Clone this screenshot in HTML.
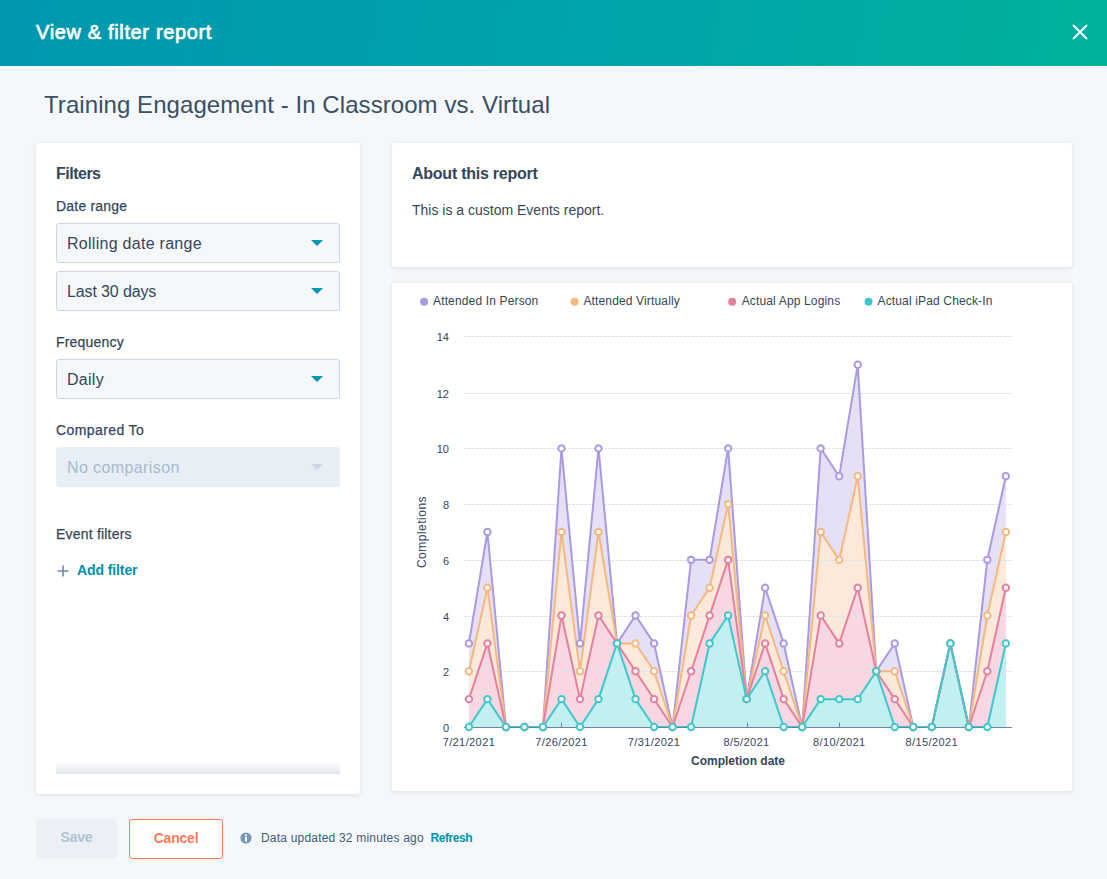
<!DOCTYPE html>
<html><head><meta charset="utf-8">
<style>
*{box-sizing:border-box;margin:0;padding:0}
html,body{width:1107px;height:879px;overflow:hidden;background:#f5f8fa;font-family:"Liberation Sans",sans-serif;color:#33475b}
.hdr{position:absolute;left:0;top:0;width:1107px;height:66px;background:linear-gradient(100deg,#0097b0 0%,#00a4aa 55%,#00b29c 100%)}
.hdr h1{position:absolute;left:36px;top:20px;font-size:20px;font-weight:normal;-webkit-text-stroke:0.7px #fff;color:#fff;line-height:24px;white-space:nowrap;letter-spacing:0.65px}
.close{position:absolute;left:1072px;top:24px;width:16px;height:16px}
.title{position:absolute;left:44px;top:90px;font-size:24px;font-weight:normal;line-height:30px;white-space:nowrap;color:#3a4f63;letter-spacing:0.07px}
.card{position:absolute;background:#fff;border-radius:3px;box-shadow:0 1px 5px rgba(45,62,80,.12)}
.lbl{position:absolute;left:20px;font-size:14px;line-height:18px;white-space:nowrap;-webkit-text-stroke:0.25px #33475b;letter-spacing:0.2px}
.h{font-size:16px;font-weight:bold;-webkit-text-stroke:0;letter-spacing:-0.25px}
.sel{position:absolute;left:20px;width:284px;height:40px;background:#f5f8fa;border:1px solid #cbd6e2;border-radius:3px}
.sel span{position:absolute;left:10px;top:9.5px;font-size:16px;line-height:20px;white-space:nowrap;letter-spacing:0.28px}
.sel i{position:absolute;right:16.5px;top:16px;width:0;height:0;border-left:6px solid transparent;border-right:6px solid transparent;border-top:6px solid #0098b2}
.sel.dis{background:#e7eef5;border-color:#e7eef5}
.sel.dis span{color:#a8bacd}
.sel.dis i{border-top-color:#cbd6e2}
.btn{position:absolute;top:819px;height:40px;border-radius:3px;font-size:14px;font-weight:bold;text-align:center;line-height:36px;letter-spacing:-0.2px}
</style></head><body>
<div class="hdr"><h1>View &amp; filter report</h1>
<svg class="close" viewBox="0 0 16 16"><path d="M1 1L15 15M15 1L1 15" stroke="#fff" stroke-width="2" fill="none"/></svg>
</div>
<div class="title">Training Engagement - In Classroom vs. Virtual</div>

<div class="card" style="left:36px;top:143px;width:324px;height:651px">
  <div class="lbl h" style="top:22px;letter-spacing:-0.5px">Filters</div>
  <div class="lbl" style="top:54px">Date range</div>
  <div class="sel" style="top:80px"><span>Rolling date range</span><i></i></div>
  <div class="sel" style="top:128px"><span style="letter-spacing:-0.13px">Last 30 days</span><i></i></div>
  <div class="lbl" style="top:190px">Frequency</div>
  <div class="sel" style="top:216px"><span>Daily</span><i></i></div>
  <div class="lbl" style="top:278px;letter-spacing:0.4px">Compared To</div>
  <div class="sel dis" style="top:304px"><span style="letter-spacing:0.4px">No comparison</span><i></i></div>
  <div class="lbl" style="top:382px">Event filters</div>
  <svg style="position:absolute;left:21px;top:421.5px" width="12" height="12" viewBox="0 0 12 12"><path d="M6 0.5V11.5M0.5 6H11.5" stroke="#6f8aa8" stroke-width="1.6" fill="none"/></svg>
  <div class="lbl" style="top:418px;left:41px;color:#0091ae;font-weight:bold;-webkit-text-stroke:0;letter-spacing:-0.1px">Add filter</div>
  <div style="position:absolute;left:20px;top:618px;width:284px;height:13px;background:linear-gradient(#fff,#e1e7ef)"></div>
</div>

<div class="card" style="left:392px;top:143px;width:680px;height:124px">
  <div class="lbl h" style="top:22px">About this report</div>
  <div class="lbl" style="top:58px;-webkit-text-stroke:0;letter-spacing:0">This is a custom Events report.</div>
</div>

<div class="card" style="left:392px;top:283px;width:680px;height:508px" id="chartcard">
</div>

<div class="btn" style="left:36px;width:81px;background:#eaf0f6;color:#b0c1d4">Save</div>
<div class="btn" style="left:129px;width:94px;background:#fff;border:1px solid #ff7a59;color:#ff7a59">Cancel</div>
<svg style="position:absolute;left:240px;top:832px" width="12" height="12" viewBox="0 0 12 12"><circle cx="6" cy="6" r="5.6" fill="#7c98b6"/><circle cx="6" cy="3.3" r="1.1" fill="#fff"/><rect x="5" y="5" width="2" height="4.6" fill="#fff"/></svg>
<div style="position:absolute;left:261px;top:830px;font-size:12px;line-height:16px;white-space:nowrap;color:#425b76;letter-spacing:0.2px">Data updated 32 minutes ago <b style="color:#0091ae;margin-left:3px;letter-spacing:-0.4px">Refresh</b></div>
<!--CHART--><svg id="chart" width="1107" height="879" style="position:absolute;left:0;top:0">
<polygon points="468.90,727.00 468.90,643.42 487.41,531.98 505.93,727.00 524.44,727.00 542.96,727.00 561.48,448.40 579.99,643.42 598.50,448.40 617.02,643.42 635.53,615.56 654.05,643.42 672.57,727.00 691.08,559.84 709.60,559.84 728.11,448.40 746.62,699.14 765.14,587.70 783.65,643.42 802.17,727.00 820.68,448.40 839.20,476.26 857.71,364.82 876.23,671.28 894.75,643.42 913.26,727.00 931.77,727.00 950.29,643.42 968.81,727.00 987.32,559.84 1005.84,476.26 1005.84,727.00" fill="#e6e0f7"/>
<polygon points="468.90,727.00 468.90,671.28 487.41,587.70 505.93,727.00 524.44,727.00 542.96,727.00 561.48,531.98 579.99,671.28 598.50,531.98 617.02,643.42 635.53,643.42 654.05,671.28 672.57,727.00 691.08,615.56 709.60,587.70 728.11,504.12 746.62,699.14 765.14,615.56 783.65,671.28 802.17,727.00 820.68,531.98 839.20,559.84 857.71,476.26 876.23,671.28 894.75,671.28 913.26,727.00 931.77,727.00 950.29,643.42 968.81,727.00 987.32,615.56 1005.84,531.98 1005.84,727.00" fill="#fde9da"/>
<polygon points="468.90,727.00 468.90,699.14 487.41,643.42 505.93,727.00 524.44,727.00 542.96,727.00 561.48,615.56 579.99,699.14 598.50,615.56 617.02,643.42 635.53,671.28 654.05,699.14 672.57,727.00 691.08,671.28 709.60,615.56 728.11,559.84 746.62,699.14 765.14,643.42 783.65,699.14 802.17,727.00 820.68,615.56 839.20,643.42 857.71,587.70 876.23,671.28 894.75,699.14 913.26,727.00 931.77,727.00 950.29,643.42 968.81,727.00 987.32,671.28 1005.84,587.70 1005.84,727.00" fill="#f8d7e2"/>
<polygon points="468.90,727.00 468.90,727.00 487.41,699.14 505.93,727.00 524.44,727.00 542.96,727.00 561.48,699.14 579.99,727.00 598.50,699.14 617.02,643.42 635.53,699.14 654.05,727.00 672.57,727.00 691.08,727.00 709.60,643.42 728.11,615.56 746.62,699.14 765.14,671.28 783.65,727.00 802.17,727.00 820.68,699.14 839.20,699.14 857.71,699.14 876.23,671.28 894.75,727.00 913.26,727.00 931.77,727.00 950.29,643.42 968.81,727.00 987.32,727.00 1005.84,643.42 1005.84,727.00" fill="#c2eff0"/>
<line x1="464" y1="671.50" x2="1012" y2="671.50" stroke="#dbe3ec" stroke-width="1" stroke-dasharray="3,1"/>
<line x1="464" y1="616.50" x2="1012" y2="616.50" stroke="#dbe3ec" stroke-width="1" stroke-dasharray="3,1"/>
<line x1="464" y1="560.50" x2="1012" y2="560.50" stroke="#dbe3ec" stroke-width="1" stroke-dasharray="3,1"/>
<line x1="464" y1="504.50" x2="1012" y2="504.50" stroke="#dbe3ec" stroke-width="1" stroke-dasharray="3,1"/>
<line x1="464" y1="448.50" x2="1012" y2="448.50" stroke="#dbe3ec" stroke-width="1" stroke-dasharray="3,1"/>
<line x1="464" y1="393.50" x2="1012" y2="393.50" stroke="#dbe3ec" stroke-width="1" stroke-dasharray="3,1"/>
<line x1="464" y1="336.50" x2="1012" y2="336.50" stroke="#dbe3ec" stroke-width="1" stroke-dasharray="3,1"/>
<polyline points="468.90,643.42 487.41,531.98 505.93,727.00 524.44,727.00 542.96,727.00 561.48,448.40 579.99,643.42 598.50,448.40 617.02,643.42 635.53,615.56 654.05,643.42 672.57,727.00 691.08,559.84 709.60,559.84 728.11,448.40 746.62,699.14 765.14,587.70 783.65,643.42 802.17,727.00 820.68,448.40 839.20,476.26 857.71,364.82 876.23,671.28 894.75,643.42 913.26,727.00 931.77,727.00 950.29,643.42 968.81,727.00 987.32,559.84 1005.84,476.26" fill="none" stroke="#ab99e2" stroke-width="2" stroke-linejoin="round" stroke-linecap="round"/>
<polyline points="468.90,671.28 487.41,587.70 505.93,727.00 524.44,727.00 542.96,727.00 561.48,531.98 579.99,671.28 598.50,531.98 617.02,643.42 635.53,643.42 654.05,671.28 672.57,727.00 691.08,615.56 709.60,587.70 728.11,504.12 746.62,699.14 765.14,615.56 783.65,671.28 802.17,727.00 820.68,531.98 839.20,559.84 857.71,476.26 876.23,671.28 894.75,671.28 913.26,727.00 931.77,727.00 950.29,643.42 968.81,727.00 987.32,615.56 1005.84,531.98" fill="none" stroke="#f5b87e" stroke-width="2" stroke-linejoin="round" stroke-linecap="round"/>
<polyline points="468.90,699.14 487.41,643.42 505.93,727.00 524.44,727.00 542.96,727.00 561.48,615.56 579.99,699.14 598.50,615.56 617.02,643.42 635.53,671.28 654.05,699.14 672.57,727.00 691.08,671.28 709.60,615.56 728.11,559.84 746.62,699.14 765.14,643.42 783.65,699.14 802.17,727.00 820.68,615.56 839.20,643.42 857.71,587.70 876.23,671.28 894.75,699.14 913.26,727.00 931.77,727.00 950.29,643.42 968.81,727.00 987.32,671.28 1005.84,587.70" fill="none" stroke="#e5809f" stroke-width="2" stroke-linejoin="round" stroke-linecap="round"/>
<polyline points="468.90,727.00 487.41,699.14 505.93,727.00 524.44,727.00 542.96,727.00 561.48,699.14 579.99,727.00 598.50,699.14 617.02,643.42 635.53,699.14 654.05,727.00 672.57,727.00 691.08,727.00 709.60,643.42 728.11,615.56 746.62,699.14 765.14,671.28 783.65,727.00 802.17,727.00 820.68,699.14 839.20,699.14 857.71,699.14 876.23,671.28 894.75,727.00 913.26,727.00 931.77,727.00 950.29,643.42 968.81,727.00 987.32,727.00 1005.84,643.42" fill="none" stroke="#3ec8ce" stroke-width="2" stroke-linejoin="round" stroke-linecap="round"/>
<line x1="464" y1="727.5" x2="1012" y2="727.5" stroke="#6a84a2" stroke-width="1"/>
<line x1="469.50" y1="722.50" x2="469.50" y2="727.50" stroke="#6a84a2" stroke-width="1"/>
<line x1="561.50" y1="722.50" x2="561.50" y2="727.50" stroke="#6a84a2" stroke-width="1"/>
<line x1="654.50" y1="722.50" x2="654.50" y2="727.50" stroke="#6a84a2" stroke-width="1"/>
<line x1="747.50" y1="722.50" x2="747.50" y2="727.50" stroke="#6a84a2" stroke-width="1"/>
<line x1="839.50" y1="722.50" x2="839.50" y2="727.50" stroke="#6a84a2" stroke-width="1"/>
<line x1="932.50" y1="722.50" x2="932.50" y2="727.50" stroke="#6a84a2" stroke-width="1"/>
<circle cx="468.90" cy="643.42" r="3.2" fill="#fff" stroke="#ab99e2" stroke-width="2"/>
<circle cx="487.41" cy="531.98" r="3.2" fill="#fff" stroke="#ab99e2" stroke-width="2"/>
<circle cx="505.93" cy="727.00" r="3.2" fill="#fff" stroke="#ab99e2" stroke-width="2"/>
<circle cx="524.44" cy="727.00" r="3.2" fill="#fff" stroke="#ab99e2" stroke-width="2"/>
<circle cx="542.96" cy="727.00" r="3.2" fill="#fff" stroke="#ab99e2" stroke-width="2"/>
<circle cx="561.48" cy="448.40" r="3.2" fill="#fff" stroke="#ab99e2" stroke-width="2"/>
<circle cx="579.99" cy="643.42" r="3.2" fill="#fff" stroke="#ab99e2" stroke-width="2"/>
<circle cx="598.50" cy="448.40" r="3.2" fill="#fff" stroke="#ab99e2" stroke-width="2"/>
<circle cx="617.02" cy="643.42" r="3.2" fill="#fff" stroke="#ab99e2" stroke-width="2"/>
<circle cx="635.53" cy="615.56" r="3.2" fill="#fff" stroke="#ab99e2" stroke-width="2"/>
<circle cx="654.05" cy="643.42" r="3.2" fill="#fff" stroke="#ab99e2" stroke-width="2"/>
<circle cx="672.57" cy="727.00" r="3.2" fill="#fff" stroke="#ab99e2" stroke-width="2"/>
<circle cx="691.08" cy="559.84" r="3.2" fill="#fff" stroke="#ab99e2" stroke-width="2"/>
<circle cx="709.60" cy="559.84" r="3.2" fill="#fff" stroke="#ab99e2" stroke-width="2"/>
<circle cx="728.11" cy="448.40" r="3.2" fill="#fff" stroke="#ab99e2" stroke-width="2"/>
<circle cx="746.62" cy="699.14" r="3.2" fill="#fff" stroke="#ab99e2" stroke-width="2"/>
<circle cx="765.14" cy="587.70" r="3.2" fill="#fff" stroke="#ab99e2" stroke-width="2"/>
<circle cx="783.65" cy="643.42" r="3.2" fill="#fff" stroke="#ab99e2" stroke-width="2"/>
<circle cx="802.17" cy="727.00" r="3.2" fill="#fff" stroke="#ab99e2" stroke-width="2"/>
<circle cx="820.68" cy="448.40" r="3.2" fill="#fff" stroke="#ab99e2" stroke-width="2"/>
<circle cx="839.20" cy="476.26" r="3.2" fill="#fff" stroke="#ab99e2" stroke-width="2"/>
<circle cx="857.71" cy="364.82" r="3.2" fill="#fff" stroke="#ab99e2" stroke-width="2"/>
<circle cx="876.23" cy="671.28" r="3.2" fill="#fff" stroke="#ab99e2" stroke-width="2"/>
<circle cx="894.75" cy="643.42" r="3.2" fill="#fff" stroke="#ab99e2" stroke-width="2"/>
<circle cx="913.26" cy="727.00" r="3.2" fill="#fff" stroke="#ab99e2" stroke-width="2"/>
<circle cx="931.77" cy="727.00" r="3.2" fill="#fff" stroke="#ab99e2" stroke-width="2"/>
<circle cx="950.29" cy="643.42" r="3.2" fill="#fff" stroke="#ab99e2" stroke-width="2"/>
<circle cx="968.81" cy="727.00" r="3.2" fill="#fff" stroke="#ab99e2" stroke-width="2"/>
<circle cx="987.32" cy="559.84" r="3.2" fill="#fff" stroke="#ab99e2" stroke-width="2"/>
<circle cx="1005.84" cy="476.26" r="3.2" fill="#fff" stroke="#ab99e2" stroke-width="2"/>
<circle cx="468.90" cy="671.28" r="3.2" fill="#fff" stroke="#f5b87e" stroke-width="2"/>
<circle cx="487.41" cy="587.70" r="3.2" fill="#fff" stroke="#f5b87e" stroke-width="2"/>
<circle cx="505.93" cy="727.00" r="3.2" fill="#fff" stroke="#f5b87e" stroke-width="2"/>
<circle cx="524.44" cy="727.00" r="3.2" fill="#fff" stroke="#f5b87e" stroke-width="2"/>
<circle cx="542.96" cy="727.00" r="3.2" fill="#fff" stroke="#f5b87e" stroke-width="2"/>
<circle cx="561.48" cy="531.98" r="3.2" fill="#fff" stroke="#f5b87e" stroke-width="2"/>
<circle cx="579.99" cy="671.28" r="3.2" fill="#fff" stroke="#f5b87e" stroke-width="2"/>
<circle cx="598.50" cy="531.98" r="3.2" fill="#fff" stroke="#f5b87e" stroke-width="2"/>
<circle cx="617.02" cy="643.42" r="3.2" fill="#fff" stroke="#f5b87e" stroke-width="2"/>
<circle cx="635.53" cy="643.42" r="3.2" fill="#fff" stroke="#f5b87e" stroke-width="2"/>
<circle cx="654.05" cy="671.28" r="3.2" fill="#fff" stroke="#f5b87e" stroke-width="2"/>
<circle cx="672.57" cy="727.00" r="3.2" fill="#fff" stroke="#f5b87e" stroke-width="2"/>
<circle cx="691.08" cy="615.56" r="3.2" fill="#fff" stroke="#f5b87e" stroke-width="2"/>
<circle cx="709.60" cy="587.70" r="3.2" fill="#fff" stroke="#f5b87e" stroke-width="2"/>
<circle cx="728.11" cy="504.12" r="3.2" fill="#fff" stroke="#f5b87e" stroke-width="2"/>
<circle cx="746.62" cy="699.14" r="3.2" fill="#fff" stroke="#f5b87e" stroke-width="2"/>
<circle cx="765.14" cy="615.56" r="3.2" fill="#fff" stroke="#f5b87e" stroke-width="2"/>
<circle cx="783.65" cy="671.28" r="3.2" fill="#fff" stroke="#f5b87e" stroke-width="2"/>
<circle cx="802.17" cy="727.00" r="3.2" fill="#fff" stroke="#f5b87e" stroke-width="2"/>
<circle cx="820.68" cy="531.98" r="3.2" fill="#fff" stroke="#f5b87e" stroke-width="2"/>
<circle cx="839.20" cy="559.84" r="3.2" fill="#fff" stroke="#f5b87e" stroke-width="2"/>
<circle cx="857.71" cy="476.26" r="3.2" fill="#fff" stroke="#f5b87e" stroke-width="2"/>
<circle cx="876.23" cy="671.28" r="3.2" fill="#fff" stroke="#f5b87e" stroke-width="2"/>
<circle cx="894.75" cy="671.28" r="3.2" fill="#fff" stroke="#f5b87e" stroke-width="2"/>
<circle cx="913.26" cy="727.00" r="3.2" fill="#fff" stroke="#f5b87e" stroke-width="2"/>
<circle cx="931.77" cy="727.00" r="3.2" fill="#fff" stroke="#f5b87e" stroke-width="2"/>
<circle cx="950.29" cy="643.42" r="3.2" fill="#fff" stroke="#f5b87e" stroke-width="2"/>
<circle cx="968.81" cy="727.00" r="3.2" fill="#fff" stroke="#f5b87e" stroke-width="2"/>
<circle cx="987.32" cy="615.56" r="3.2" fill="#fff" stroke="#f5b87e" stroke-width="2"/>
<circle cx="1005.84" cy="531.98" r="3.2" fill="#fff" stroke="#f5b87e" stroke-width="2"/>
<circle cx="468.90" cy="699.14" r="3.2" fill="#fff" stroke="#e5809f" stroke-width="2"/>
<circle cx="487.41" cy="643.42" r="3.2" fill="#fff" stroke="#e5809f" stroke-width="2"/>
<circle cx="505.93" cy="727.00" r="3.2" fill="#fff" stroke="#e5809f" stroke-width="2"/>
<circle cx="524.44" cy="727.00" r="3.2" fill="#fff" stroke="#e5809f" stroke-width="2"/>
<circle cx="542.96" cy="727.00" r="3.2" fill="#fff" stroke="#e5809f" stroke-width="2"/>
<circle cx="561.48" cy="615.56" r="3.2" fill="#fff" stroke="#e5809f" stroke-width="2"/>
<circle cx="579.99" cy="699.14" r="3.2" fill="#fff" stroke="#e5809f" stroke-width="2"/>
<circle cx="598.50" cy="615.56" r="3.2" fill="#fff" stroke="#e5809f" stroke-width="2"/>
<circle cx="617.02" cy="643.42" r="3.2" fill="#fff" stroke="#e5809f" stroke-width="2"/>
<circle cx="635.53" cy="671.28" r="3.2" fill="#fff" stroke="#e5809f" stroke-width="2"/>
<circle cx="654.05" cy="699.14" r="3.2" fill="#fff" stroke="#e5809f" stroke-width="2"/>
<circle cx="672.57" cy="727.00" r="3.2" fill="#fff" stroke="#e5809f" stroke-width="2"/>
<circle cx="691.08" cy="671.28" r="3.2" fill="#fff" stroke="#e5809f" stroke-width="2"/>
<circle cx="709.60" cy="615.56" r="3.2" fill="#fff" stroke="#e5809f" stroke-width="2"/>
<circle cx="728.11" cy="559.84" r="3.2" fill="#fff" stroke="#e5809f" stroke-width="2"/>
<circle cx="746.62" cy="699.14" r="3.2" fill="#fff" stroke="#e5809f" stroke-width="2"/>
<circle cx="765.14" cy="643.42" r="3.2" fill="#fff" stroke="#e5809f" stroke-width="2"/>
<circle cx="783.65" cy="699.14" r="3.2" fill="#fff" stroke="#e5809f" stroke-width="2"/>
<circle cx="802.17" cy="727.00" r="3.2" fill="#fff" stroke="#e5809f" stroke-width="2"/>
<circle cx="820.68" cy="615.56" r="3.2" fill="#fff" stroke="#e5809f" stroke-width="2"/>
<circle cx="839.20" cy="643.42" r="3.2" fill="#fff" stroke="#e5809f" stroke-width="2"/>
<circle cx="857.71" cy="587.70" r="3.2" fill="#fff" stroke="#e5809f" stroke-width="2"/>
<circle cx="876.23" cy="671.28" r="3.2" fill="#fff" stroke="#e5809f" stroke-width="2"/>
<circle cx="894.75" cy="699.14" r="3.2" fill="#fff" stroke="#e5809f" stroke-width="2"/>
<circle cx="913.26" cy="727.00" r="3.2" fill="#fff" stroke="#e5809f" stroke-width="2"/>
<circle cx="931.77" cy="727.00" r="3.2" fill="#fff" stroke="#e5809f" stroke-width="2"/>
<circle cx="950.29" cy="643.42" r="3.2" fill="#fff" stroke="#e5809f" stroke-width="2"/>
<circle cx="968.81" cy="727.00" r="3.2" fill="#fff" stroke="#e5809f" stroke-width="2"/>
<circle cx="987.32" cy="671.28" r="3.2" fill="#fff" stroke="#e5809f" stroke-width="2"/>
<circle cx="1005.84" cy="587.70" r="3.2" fill="#fff" stroke="#e5809f" stroke-width="2"/>
<circle cx="468.90" cy="727.00" r="3.2" fill="#fff" stroke="#3ec8ce" stroke-width="2"/>
<circle cx="487.41" cy="699.14" r="3.2" fill="#fff" stroke="#3ec8ce" stroke-width="2"/>
<circle cx="505.93" cy="727.00" r="3.2" fill="#fff" stroke="#3ec8ce" stroke-width="2"/>
<circle cx="524.44" cy="727.00" r="3.2" fill="#fff" stroke="#3ec8ce" stroke-width="2"/>
<circle cx="542.96" cy="727.00" r="3.2" fill="#fff" stroke="#3ec8ce" stroke-width="2"/>
<circle cx="561.48" cy="699.14" r="3.2" fill="#fff" stroke="#3ec8ce" stroke-width="2"/>
<circle cx="579.99" cy="727.00" r="3.2" fill="#fff" stroke="#3ec8ce" stroke-width="2"/>
<circle cx="598.50" cy="699.14" r="3.2" fill="#fff" stroke="#3ec8ce" stroke-width="2"/>
<circle cx="617.02" cy="643.42" r="3.2" fill="#fff" stroke="#3ec8ce" stroke-width="2"/>
<circle cx="635.53" cy="699.14" r="3.2" fill="#fff" stroke="#3ec8ce" stroke-width="2"/>
<circle cx="654.05" cy="727.00" r="3.2" fill="#fff" stroke="#3ec8ce" stroke-width="2"/>
<circle cx="672.57" cy="727.00" r="3.2" fill="#fff" stroke="#3ec8ce" stroke-width="2"/>
<circle cx="691.08" cy="727.00" r="3.2" fill="#fff" stroke="#3ec8ce" stroke-width="2"/>
<circle cx="709.60" cy="643.42" r="3.2" fill="#fff" stroke="#3ec8ce" stroke-width="2"/>
<circle cx="728.11" cy="615.56" r="3.2" fill="#fff" stroke="#3ec8ce" stroke-width="2"/>
<circle cx="746.62" cy="699.14" r="3.2" fill="#fff" stroke="#3ec8ce" stroke-width="2"/>
<circle cx="765.14" cy="671.28" r="3.2" fill="#fff" stroke="#3ec8ce" stroke-width="2"/>
<circle cx="783.65" cy="727.00" r="3.2" fill="#fff" stroke="#3ec8ce" stroke-width="2"/>
<circle cx="802.17" cy="727.00" r="3.2" fill="#fff" stroke="#3ec8ce" stroke-width="2"/>
<circle cx="820.68" cy="699.14" r="3.2" fill="#fff" stroke="#3ec8ce" stroke-width="2"/>
<circle cx="839.20" cy="699.14" r="3.2" fill="#fff" stroke="#3ec8ce" stroke-width="2"/>
<circle cx="857.71" cy="699.14" r="3.2" fill="#fff" stroke="#3ec8ce" stroke-width="2"/>
<circle cx="876.23" cy="671.28" r="3.2" fill="#fff" stroke="#3ec8ce" stroke-width="2"/>
<circle cx="894.75" cy="727.00" r="3.2" fill="#fff" stroke="#3ec8ce" stroke-width="2"/>
<circle cx="913.26" cy="727.00" r="3.2" fill="#fff" stroke="#3ec8ce" stroke-width="2"/>
<circle cx="931.77" cy="727.00" r="3.2" fill="#fff" stroke="#3ec8ce" stroke-width="2"/>
<circle cx="950.29" cy="643.42" r="3.2" fill="#fff" stroke="#3ec8ce" stroke-width="2"/>
<circle cx="968.81" cy="727.00" r="3.2" fill="#fff" stroke="#3ec8ce" stroke-width="2"/>
<circle cx="987.32" cy="727.00" r="3.2" fill="#fff" stroke="#3ec8ce" stroke-width="2"/>
<circle cx="1005.84" cy="643.42" r="3.2" fill="#fff" stroke="#3ec8ce" stroke-width="2"/>
<text x="449" y="732.00" text-anchor="end" font-size="11" fill="#33475b" font-family="Liberation Sans">0</text>
<text x="449" y="676.00" text-anchor="end" font-size="11" fill="#33475b" font-family="Liberation Sans">2</text>
<text x="449" y="621.00" text-anchor="end" font-size="11" fill="#33475b" font-family="Liberation Sans">4</text>
<text x="449" y="565.00" text-anchor="end" font-size="11" fill="#33475b" font-family="Liberation Sans">6</text>
<text x="449" y="509.00" text-anchor="end" font-size="11" fill="#33475b" font-family="Liberation Sans">8</text>
<text x="449" y="453.00" text-anchor="end" font-size="11" fill="#33475b" font-family="Liberation Sans">10</text>
<text x="449" y="398.00" text-anchor="end" font-size="11" fill="#33475b" font-family="Liberation Sans">12</text>
<text x="449" y="341.00" text-anchor="end" font-size="11" fill="#33475b" font-family="Liberation Sans">14</text>
<text x="468.90" y="746" text-anchor="middle" font-size="11" letter-spacing="0.4" fill="#33475b" font-family="Liberation Sans">7/21/2021</text>
<text x="561.48" y="746" text-anchor="middle" font-size="11" letter-spacing="0.4" fill="#33475b" font-family="Liberation Sans">7/26/2021</text>
<text x="654.05" y="746" text-anchor="middle" font-size="11" letter-spacing="0.4" fill="#33475b" font-family="Liberation Sans">7/31/2021</text>
<text x="746.62" y="746" text-anchor="middle" font-size="11" letter-spacing="0.4" fill="#33475b" font-family="Liberation Sans">8/5/2021</text>
<text x="839.20" y="746" text-anchor="middle" font-size="11" letter-spacing="0.4" fill="#33475b" font-family="Liberation Sans">8/10/2021</text>
<text x="931.77" y="746" text-anchor="middle" font-size="11" letter-spacing="0.4" fill="#33475b" font-family="Liberation Sans">8/15/2021</text>
<text x="738" y="765" text-anchor="middle" font-size="12" font-weight="bold" fill="#33475b" font-family="Liberation Sans">Completion date</text>
<text transform="translate(426,532) rotate(-90)" text-anchor="middle" font-size="12" letter-spacing="0.5" fill="#33475b" font-family="Liberation Sans">Completions</text>
<circle cx="424.1" cy="301.8" r="4" fill="#ab99e2"/>
<text x="433" y="305" font-size="12" letter-spacing="0.15" fill="#33475b" font-family="Liberation Sans">Attended In Person</text>
<circle cx="574.6" cy="301.8" r="4" fill="#f5b87e"/>
<text x="583.4" y="305" font-size="12" letter-spacing="0.15" fill="#33475b" font-family="Liberation Sans">Attended Virtually</text>
<circle cx="732.2" cy="301.8" r="4" fill="#e5809f"/>
<text x="741.7" y="305" font-size="12" letter-spacing="0.15" fill="#33475b" font-family="Liberation Sans">Actual App Logins</text>
<circle cx="868.5" cy="301.8" r="4" fill="#3ec8ce"/>
<text x="877.5" y="305" font-size="12" letter-spacing="0.15" fill="#33475b" font-family="Liberation Sans">Actual iPad Check-In</text>
</svg><!--/CHART-->
</body></html>
